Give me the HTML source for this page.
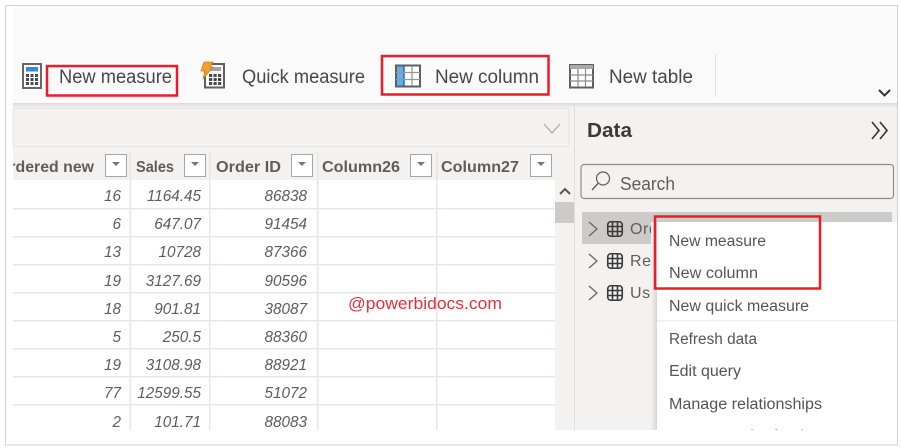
<!DOCTYPE html>
<html lang="en">
<head>
<meta charset="utf-8">
<title>Power BI New measure and New column</title>
<style>
html,body{margin:0;padding:0;width:901px;height:448px;background:#fff;overflow:hidden}
svg{display:block;font-family:"Liberation Sans",sans-serif;filter:blur(.35px)}
.rb{font-size:19px;fill:#474747}
.h{font-size:16px;font-weight:bold;fill:#605e5c}
.c{font-size:15.3px;font-style:italic;fill:#605e5c;text-anchor:end}
.m{font-size:15.5px;fill:#555}
.s{font-size:16px;fill:#605e5c;letter-spacing:.6px}
</style>
</head>
<body>
<svg width="901" height="448" viewBox="0 0 901 448" xmlns="http://www.w3.org/2000/svg">
<defs>
<linearGradient id="sh" x1="0" y1="0" x2="0" y2="1"><stop offset="0" stop-color="#dcdad8"/><stop offset="1" stop-color="#f3f2f1"/></linearGradient>
<linearGradient id="sl" x1="0" y1="0" x2="1" y2="0"><stop offset="0" stop-color="#f3f2f1"/><stop offset="1" stop-color="#d8d6d4"/></linearGradient>
<clipPath id="tc"><rect x="13" y="150" width="542" height="280"/></clipPath>
<clipPath id="mc"><rect x="657" y="222" width="240" height="208"/></clipPath>
<g id="ti" fill="none" stroke="#3a3a3a" stroke-width="1.6"><rect x="0.75" y="0.75" width="14.5" height="14.5" rx="3"/><path d="M5.5 1V15M10.5 1V15M1 5.5H15M1 10.5H15"/></g>
<g id="fb"><rect x="0.5" y="0.5" width="21" height="22" fill="#fff" stroke="#a8a6a4"/><path d="M7 8H15L11 12Z" fill="#777"/></g>
<path id="ch" d="M0 0L8 7L0 14" fill="none" stroke="#666" stroke-width="1.3"/>
</defs>

<!-- frame -->
<rect x="5.5" y="5.5" width="892" height="439.5" fill="#fff" stroke="#d2d2d2"/>
<!-- ribbon -->
<rect x="13" y="6" width="884" height="97" fill="#fafafa"/>
<!-- content bg -->
<rect x="13" y="103" width="884" height="327" fill="#f3f2f1"/>
<rect x="13" y="103" width="884" height="5" fill="url(#sh)"/>

<!-- filter bar -->
<rect x="13" y="108.500" width="556" height="38" rx="2" fill="#f3f2f1" stroke="#e6e4e2"/>
<path d="M544 124L552 133L560 124" fill="none" stroke="#a8a6a4" stroke-width="1.2"/>

<!-- sidebar divider -->
<rect x="574" y="103" width="1" height="327" fill="#e2e0de"/>

<!-- ribbon icons: calculator -->
<g>
<rect x="23" y="64" width="18" height="24" fill="#fff" stroke="#666" stroke-width="2"/>
<rect x="26" y="67" width="12" height="4.500" fill="#3a8ad6"/>
<g fill="#4a4a4a"><rect x="26" y="74" width="3" height="3"/><rect x="30.500" y="74" width="3" height="3"/><rect x="35" y="74" width="3" height="3"/><rect x="26" y="78" width="3" height="3"/><rect x="30.500" y="78" width="3" height="3"/><rect x="35" y="78" width="3" height="3"/><rect x="26" y="82" width="3" height="3"/><rect x="30.500" y="82" width="3" height="3"/><rect x="35" y="82" width="3" height="3"/></g>
</g>
<!-- quick measure -->
<g>
<rect x="205" y="64" width="19" height="23.500" fill="#fff" stroke="#5f5f5f" stroke-width="2"/>
<rect x="209" y="67" width="12" height="4" fill="#a5a5a5"/>
<g fill="#4a4a4a"><rect x="209" y="74" width="3.200" height="3"/><rect x="213.500" y="74" width="3.200" height="3"/><rect x="218" y="74" width="3.200" height="3"/><rect x="209" y="78" width="3.200" height="3"/><rect x="213.500" y="78" width="3.200" height="3"/><rect x="218" y="78" width="3.200" height="3"/><rect x="209" y="82" width="3.200" height="3"/><rect x="213.500" y="82" width="3.200" height="3"/><rect x="218" y="82" width="3.200" height="3"/></g>
<path d="M204 62H213L210 67H213L203 79L205 71H201Z" fill="#f0a030" stroke="#d97a10" stroke-width="0.8"/>
</g>
<!-- new column -->
<g>
<rect x="396" y="66" width="8" height="20" fill="#62aee8"/>
<rect x="412" y="66" width="8" height="20" fill="#fff"/>
<rect x="404" y="66" width="8" height="20" fill="#fff"/>
<rect x="396" y="65.500" width="24" height="21" fill="none" stroke="#5f5f5f" stroke-width="2"/>
<path d="M404 66V86" stroke="#1f6fc0" stroke-width="1.5"/>
<path d="M412 66V86M396 72.500H420M396 79.500H420" stroke="#999" stroke-width="1.300" fill="none"/>
</g>
<!-- new table -->
<g>
<rect x="570" y="65" width="23" height="22.500" fill="#fff" stroke="#5f5f5f" stroke-width="2"/>
<rect x="570" y="65" width="23" height="4" fill="#aaa"/>
<path d="M578 69V87M585.500 69V87M570 75H593M570 81H593" stroke="#8a8a8a" stroke-width="1.200" fill="none"/>
</g>

<!-- ribbon labels -->
<text class="rb" x="59" y="83" textLength="113" lengthAdjust="spacingAndGlyphs">New measure</text>
<text class="rb" x="242" y="83" textLength="123" lengthAdjust="spacingAndGlyphs">Quick measure</text>
<text class="rb" x="435" y="83" textLength="104" lengthAdjust="spacingAndGlyphs">New column</text>
<text class="rb" x="609" y="83" textLength="84" lengthAdjust="spacingAndGlyphs">New table</text>
<rect x="715" y="54" width="1" height="43" fill="#e1e1e1"/>
<path d="M879 90L884.500 95.500L890 90" fill="none" stroke="#333" stroke-width="2"/>

<!-- table -->
<g clip-path="url(#tc)">
<rect x="13" y="152" width="542" height="28" fill="#f3f2f1"/>
<rect x="13" y="180" width="542" height="250" fill="#fff"/>
<g fill="#e8e6e4">
<rect x="13" y="208" width="542" height="1.500"/><rect x="13" y="236" width="542" height="1.500"/><rect x="13" y="264" width="542" height="1.500"/><rect x="13" y="292" width="542" height="1.500"/><rect x="13" y="320" width="542" height="1.500"/><rect x="13" y="348" width="542" height="1.500"/><rect x="13" y="376" width="542" height="1.500"/><rect x="13" y="404" width="542" height="1.500"/>
<rect x="129.500" y="152" width="1.500" height="278"/><rect x="209" y="152" width="1.500" height="278"/><rect x="317" y="152" width="1.500" height="278"/><rect x="436" y="152" width="1.500" height="278"/>
</g>
<text class="h" x="-3" y="172" textLength="97" lengthAdjust="spacingAndGlyphs">Ordered new</text>
<text class="h" x="136" y="172" textLength="38" lengthAdjust="spacingAndGlyphs">Sales</text>
<text class="h" x="216" y="172" textLength="65" lengthAdjust="spacingAndGlyphs">Order ID</text>
<text class="h" x="322" y="172" textLength="78" lengthAdjust="spacingAndGlyphs">Column26</text>
<text class="h" x="441" y="172" textLength="78" lengthAdjust="spacingAndGlyphs">Column27</text>
<use href="#fb" x="105" y="154"/><use href="#fb" x="184" y="154"/><use href="#fb" x="291" y="154"/><use href="#fb" x="410" y="154"/><use href="#fb" x="530" y="154"/>

<text class="c" x="121" y="201">16</text><text class="c" x="201" y="201">1164.45</text><text class="c" x="307" y="201">86838</text>
<text class="c" x="121" y="229">6</text><text class="c" x="201" y="229">647.07</text><text class="c" x="307" y="229">91454</text>
<text class="c" x="121" y="257">13</text><text class="c" x="201" y="257">10728</text><text class="c" x="307" y="257">87366</text>
<text class="c" x="121" y="286">19</text><text class="c" x="201" y="286">3127.69</text><text class="c" x="307" y="286">90596</text>
<text class="c" x="121" y="314">18</text><text class="c" x="201" y="314">901.81</text><text class="c" x="307" y="314">38087</text>
<text class="c" x="121" y="342">5</text><text class="c" x="201" y="342">250.5</text><text class="c" x="307" y="342">88360</text>
<text class="c" x="121" y="370">19</text><text class="c" x="201" y="370">3108.98</text><text class="c" x="307" y="370">88921</text>
<text class="c" x="121" y="398">77</text><text class="c" x="201" y="398">12599.55</text><text class="c" x="307" y="398">51072</text>
<text class="c" x="121" y="427">2</text><text class="c" x="201" y="427">101.71</text><text class="c" x="307" y="427">88083</text>
</g>

<!-- scrollbar -->
<path d="M560 194L565 189L570 194" fill="none" stroke="#555" stroke-width="2"/>
<rect x="555" y="202" width="19" height="21" fill="#cdcbc9"/>

<!-- watermark -->
<text x="348" y="309" font-size="16.500" fill="#e0343a" textLength="154" lengthAdjust="spacingAndGlyphs">@powerbidocs.com</text>

<!-- data pane -->
<text x="587" y="137" font-size="20" font-weight="bold" fill="#3b3a39" textLength="45" lengthAdjust="spacingAndGlyphs">Data</text>
<path d="M872 122L879 130.500L872 139M880 122L887 130.500L880 139" fill="none" stroke="#333" stroke-width="1.600"/>
<rect x="581" y="164.500" width="312.500" height="34" rx="3" fill="#f3f2f1" stroke="#8f8d8b" stroke-width="1.200"/>
<circle cx="603" cy="178.500" r="6.500" fill="none" stroke="#605e5c" stroke-width="1.200"/>
<path d="M598 183.500L592 190" stroke="#605e5c" stroke-width="1.400"/>
<text x="620" y="190" font-size="18" fill="#605e5c" textLength="55" lengthAdjust="spacingAndGlyphs">Search</text>

<rect x="582" y="212" width="310" height="32" fill="#cdcbc9"/>
<use href="#ch" x="589" y="222"/><use href="#ch" x="589" y="254"/><use href="#ch" x="589" y="286"/>
<use href="#ti" x="607" y="221"/><use href="#ti" x="607" y="253"/><use href="#ti" x="607" y="285"/>
<text class="s" x="630" y="234">Orders</text>
<text class="s" x="630" y="266">Returns</text>
<text class="s" x="630" y="298">Users</text>

<!-- context menu -->
<rect x="651" y="222" width="6" height="208" fill="url(#sl)"/>
<rect x="657" y="222" width="240" height="208" fill="#fff"/>
<rect x="657" y="320" width="240" height="1.500" fill="#f0efee"/>
<g clip-path="url(#mc)">
<text class="m" x="669" y="246" textLength="97" lengthAdjust="spacingAndGlyphs">New measure</text>
<text class="m" x="669" y="278" textLength="89" lengthAdjust="spacingAndGlyphs">New column</text>
<text class="m" x="669" y="311" textLength="140" lengthAdjust="spacingAndGlyphs">New quick measure</text>
<text class="m" x="669" y="344" textLength="88" lengthAdjust="spacingAndGlyphs">Refresh data</text>
<text class="m" x="669" y="376" textLength="72" lengthAdjust="spacingAndGlyphs">Edit query</text>
<text class="m" x="669" y="409" textLength="153" lengthAdjust="spacingAndGlyphs">Manage relationships</text>
<text class="m" x="669" y="441" textLength="140" lengthAdjust="spacingAndGlyphs">Incremental refresh</text>
</g>

<!-- red highlights -->
<g fill="none" stroke="#ed1c2b" stroke-width="2.500">
<rect x="47" y="66" width="130" height="29.500"/>
<rect x="382" y="56" width="166.500" height="38.500"/>
<rect x="655" y="216.500" width="165" height="72"/>
</g>
</svg>
</body>
</html>
